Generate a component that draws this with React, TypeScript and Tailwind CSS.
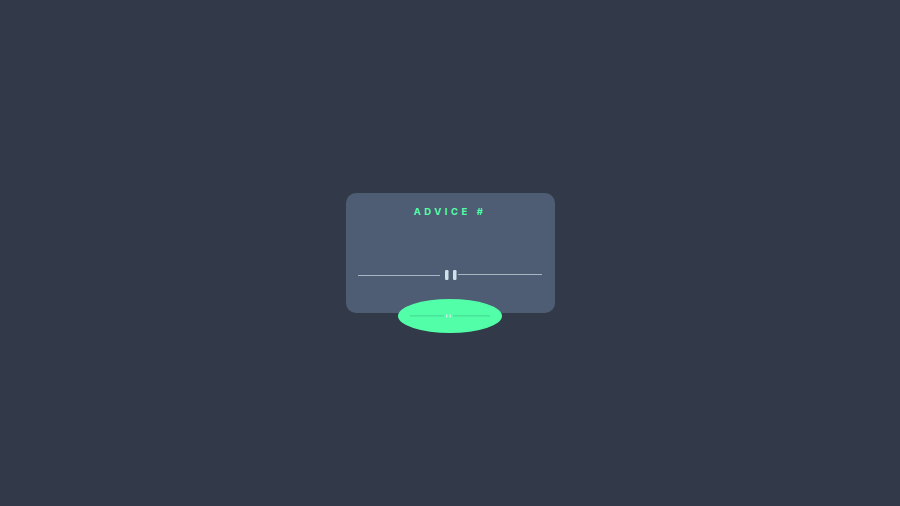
import React from "react";

export default function App() {
  return (
    <div className="min-h-screen w-full bg-[#323a49] flex items-center justify-center" style={{ fontFamily: "Inter, 'Liberation Sans', sans-serif" }}>
      <div className="relative w-[209px] h-[120px] rounded-[10px] bg-[#4e5d73] flex flex-col items-center">
        <h1 className="mt-[14px] text-[9.5px] font-bold tracking-[0.37em] text-[#52ffa8] leading-none">ADVICE #</h1>
        <svg className="mt-[52px]" width="185" height="12" viewBox="0 0 185 12" fill="none">
          <rect x="0" y="6" width="82" height="1" fill="#aab5c4" />
          <rect x="87" y="1" width="3.5" height="10" rx="1.2" fill="#cee3e9" />
          <rect x="95" y="1" width="3.5" height="10" rx="1.2" fill="#cee3e9" />
          <rect x="100" y="5" width="84" height="1" fill="#aab5c4" />
        </svg>
        <button className="absolute left-1/2 -translate-x-1/2 top-[106px] w-[104px] h-[34px] rounded-[50%] bg-[#52ffa8] flex items-center justify-center">
          <svg width="80" height="4" viewBox="0 0 80 4" fill="none">
            <rect x="0" y="1.5" width="34" height="0.8" fill="#3fc98a" />
            <rect x="36" y="0.5" width="1.5" height="3" fill="#c9e6e0" />
            <rect x="39.5" y="0.5" width="1.5" height="3" fill="#c9e6e0" />
            <rect x="43" y="1.5" width="37" height="0.8" fill="#3fc98a" />
          </svg>
        </button>
      </div>
    </div>
  );
}
